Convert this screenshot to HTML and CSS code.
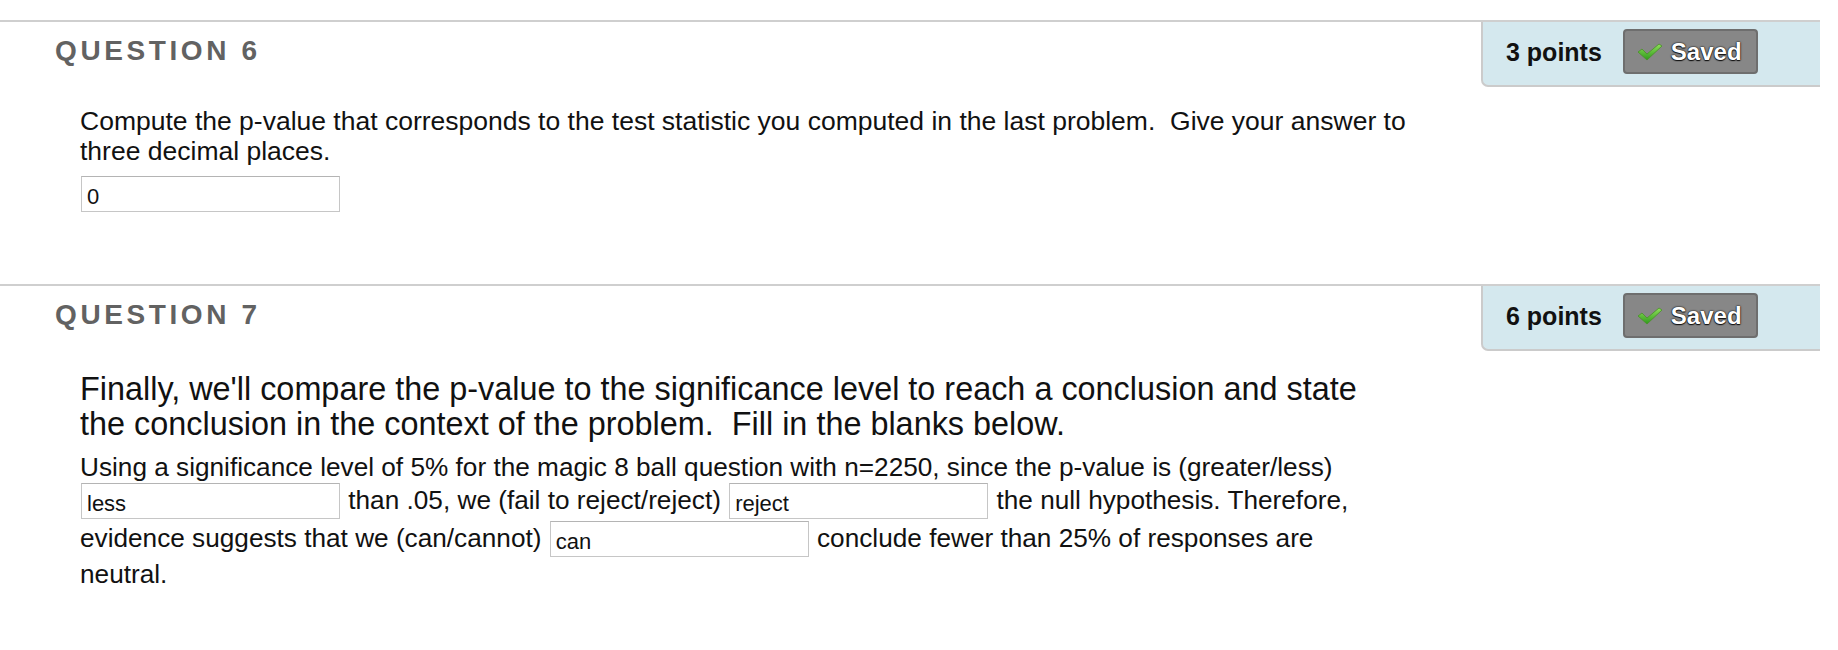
FILE: index.html
```html
<!DOCTYPE html>
<html lang="en">
<head>
<meta charset="utf-8">
<title>Questions</title>
<link rel="stylesheet" href="styles.css">
</head>
<body>
<div class="page">
  <section class="question">
    <div class="q-head">
      <h2 class="q-title">QUESTION 6</h2>
      <div class="q-status">
        <span class="points">3 points</span>
        <span class="saved">
          <svg class="check" viewBox="0 0 26 20" width="26" height="20" aria-hidden="true">
            <defs>
              <linearGradient id="g1" x1="0" y1="0" x2="0" y2="1">
                <stop offset="0" stop-color="#8fe05a"/>
                <stop offset="1" stop-color="#2f9a1c"/>
              </linearGradient>
            </defs>
            <path d="M1 10 L5 7 L10 12 L22 2 L25 4 L10 18 Z" fill="url(#g1)" stroke="#4a8f2a" stroke-width="0.8" stroke-linejoin="round"/>
          </svg>
          Saved
        </span>
      </div>
    </div>
    <div class="q-body q-body-6">
      <p class="prompt">Compute the p-value that corresponds to the test statistic you computed in the last problem.&nbsp; Give your answer to<br>three decimal places.</p>
      <input class="blank blank-block" type="text" value="0">
    </div>
  </section>

  <section class="question">
    <div class="q-head">
      <h2 class="q-title">QUESTION 7</h2>
      <div class="q-status">
        <span class="points">6 points</span>
        <span class="saved">
          <svg class="check" viewBox="0 0 26 20" width="26" height="20" aria-hidden="true">
            <defs>
              <linearGradient id="g2" x1="0" y1="0" x2="0" y2="1">
                <stop offset="0" stop-color="#8fe05a"/>
                <stop offset="1" stop-color="#2f9a1c"/>
              </linearGradient>
            </defs>
            <path d="M1 10 L5 7 L10 12 L22 2 L25 4 L10 18 Z" fill="url(#g2)" stroke="#4a8f2a" stroke-width="0.8" stroke-linejoin="round"/>
          </svg>
          Saved
        </span>
      </div>
    </div>
    <div class="q-body q-body-7">
      <p class="lead">Finally, we'll compare the p-value to the significance level to reach a conclusion and state<br>the conclusion in the context of the problem.&nbsp; Fill in the blanks below.</p>
      <p class="fill">Using a significance level of 5% for the magic 8 ball question with n=2250, since the p-value is (greater/less)<br><input class="blank" type="text" value="less"> than .05, we (fail to reject/reject) <input class="blank" type="text" value="reject"> the null hypothesis. Therefore,<br>evidence suggests that we (can/cannot) <input class="blank" type="text" value="can"> conclude fewer than 25% of responses are<br>neutral.</p>
    </div>
  </section>
</div>
</body>
</html>
```

FILE: styles.css
```css
html, body {
  margin: 0;
  padding: 0;
  background: #ffffff;
}

body {
  font-family: "Liberation Sans", Arial, Helvetica, sans-serif;
  color: #111111;
}

.page {
  width: 1820px;
  padding-top: 20px;
}

.question {
  border-top: 2px solid #cfcfcf;
}

.q-head {
  display: flex;
  justify-content: space-between;
  align-items: flex-start;
}

.q-title {
  margin: 0;
  padding: 13px 0 0 55px;
  font-size: 28px;
  line-height: 32px;
  font-weight: bold;
  letter-spacing: 3.6px;
  color: #626262;
}

.q-status {
  box-sizing: border-box;
  width: 339px;
  height: 65px;
  display: flex;
  align-items: flex-start;
  gap: 21px;
  padding: 4px 0 0 23px;
  background: #d4e8ee;
  border-left: 2px solid #cbcbcb;
  border-bottom: 2px solid #cbcbcb;
  border-bottom-left-radius: 7px;
}

.points {
  margin-top: 11px;
  font-size: 25px;
  line-height: 30px;
  font-weight: bold;
  color: #111111;
  white-space: nowrap;
}

.saved {
  box-sizing: border-box;
  width: 135px;
  height: 45px;
  margin-top: 3px;
  display: flex;
  align-items: center;
  gap: 8px;
  padding-left: 12px;
  background: #878787;
  border: 2px solid #6e6e6e;
  border-radius: 4px;
  color: #ffffff;
  font-size: 24px;
  font-weight: bold;
  text-shadow: 0 0 2px #111111, 0 1px 1px #111111, 0 0 1px #000000;
}

.check {
  display: block;
  flex: none;
}

.q-body {
  padding-left: 80px;
}

.q-body-6 {
  padding-top: 19px;
  padding-bottom: 72px;
}

.q-body-7 {
  padding-top: 21px;
  padding-bottom: 60px;
}

.prompt {
  margin: 0;
  font-size: 26.5px;
  line-height: 30px;
}

.lead {
  margin: 0;
  font-size: 32.4px;
  line-height: 35px;
}

.fill {
  margin: 10px 0 0 0;
  font-size: 26.2px;
  line-height: 31px;
}

.blank {
  box-sizing: border-box;
  width: 259px;
  height: 36px;
  margin: 0 1px 2px 1px;
  padding: 6px 5px 0 5px;
  border: 1px solid #c6c6c6;
  border-top-color: #b4b4b4;
  border-radius: 0;
  background: #ffffff;
  font-family: "Liberation Sans", Arial, Helvetica, sans-serif;
  font-size: 22px;
  color: #111111;
  vertical-align: middle;
}

.blank-block {
  display: block;
  margin: 10px 0 0 1px;
}
```
